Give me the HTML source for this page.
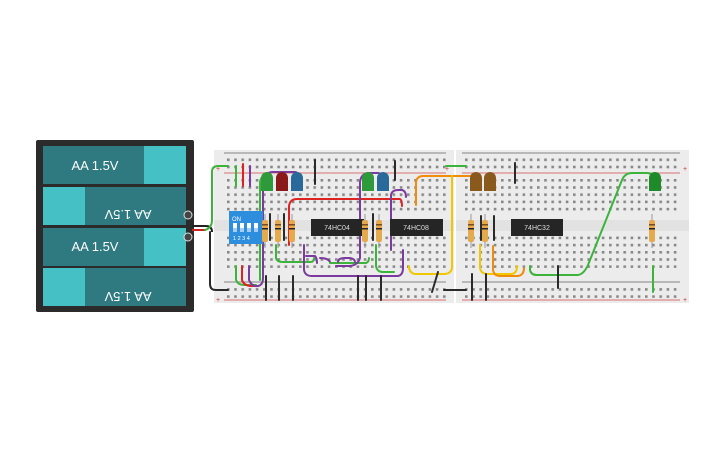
<!DOCTYPE html>
<html><head><meta charset="utf-8"><style>
html,body{margin:0;padding:0;background:#fff;width:725px;height:453px;overflow:hidden}
svg{display:block}
text{font-family:"Liberation Sans",sans-serif}
</style></head><body>
<svg width="725" height="453" viewBox="0 0 725 453" xmlns="http://www.w3.org/2000/svg">
<defs>
<pattern id="pL" width="7.2" height="7.2" patternUnits="userSpaceOnUse" patternTransform="translate(227,179)"><rect width="2.6" height="2.6" fill="#888"/></pattern>
<pattern id="pLr" width="7.2" height="7.2" patternUnits="userSpaceOnUse" patternTransform="translate(227,158.5)"><rect width="2.6" height="2.6" fill="#888"/></pattern>
<pattern id="pR" width="7.2" height="7.2" patternUnits="userSpaceOnUse" patternTransform="translate(465,179)"><rect width="2.6" height="2.6" fill="#888"/></pattern>
<pattern id="pRr" width="7.2" height="7.2" patternUnits="userSpaceOnUse" patternTransform="translate(465,158.5)"><rect width="2.6" height="2.6" fill="#888"/></pattern>
</defs>

<!-- battery -->
<rect x="36" y="140" width="158" height="172" rx="2" fill="#2b2b2b"/>
<g>
<rect x="43" y="146" width="143" height="38" fill="#2e7a80"/><rect x="144" y="146" width="42" height="38" fill="#45c1c5"/>
<text x="95" y="170" fill="#fff" font-size="13" text-anchor="middle">AA 1.5V</text>
<rect x="43" y="187" width="143" height="38" fill="#2e7a80"/><rect x="43" y="187" width="42" height="38" fill="#45c1c5"/>
<text x="128" y="202" fill="#fff" font-size="13" text-anchor="middle" transform="rotate(180 128 206)">AA 1.5V</text>
<rect x="43" y="228" width="143" height="38" fill="#2e7a80"/><rect x="144" y="228" width="42" height="38" fill="#45c1c5"/>
<text x="95" y="251" fill="#fff" font-size="13" text-anchor="middle">AA 1.5V</text>
<rect x="43" y="268" width="143" height="38" fill="#2e7a80"/><rect x="43" y="268" width="42" height="38" fill="#45c1c5"/>
<text x="128" y="284" fill="#fff" font-size="13" text-anchor="middle" transform="rotate(180 128 288)">AA 1.5V</text>
</g>
<circle cx="188" cy="215" r="4" fill="#444" stroke="#ddd"/><circle cx="188" cy="237" r="4" fill="#444" stroke="#ddd"/>
<path d="M192 226 H206 Q212 226 212 232" stroke="#222" stroke-width="2" fill="none"/>
<path d="M192 230 H206" stroke="#c22" stroke-width="2" fill="none"/>

<!-- boards -->
<rect x="214" y="150" width="240" height="153" fill="#ececec"/>
<rect x="456" y="150" width="233" height="153" fill="#ececec"/>
<rect x="214" y="220" width="240" height="11" fill="#e2e2e2"/>
<rect x="456" y="220" width="233" height="11" fill="#e2e2e2"/>
<line x1="224" y1="153" x2="446" y2="153" stroke="#999" stroke-width="1.2"/>
<line x1="224" y1="173" x2="446" y2="173" stroke="#d88" stroke-width="1.2"/>
<line x1="224" y1="282" x2="446" y2="282" stroke="#999" stroke-width="1.2"/>
<line x1="224" y1="300" x2="446" y2="300" stroke="#d88" stroke-width="1.2"/>
<line x1="462" y1="153" x2="680" y2="153" stroke="#999" stroke-width="1.2"/>
<line x1="462" y1="173" x2="680" y2="173" stroke="#d88" stroke-width="1.2"/>
<line x1="462" y1="282" x2="680" y2="282" stroke="#999" stroke-width="1.2"/>
<line x1="462" y1="300" x2="680" y2="300" stroke="#d88" stroke-width="1.2"/>
<rect x="227" y="157" width="220" height="12" fill="url(#pLr)"/>
<rect x="227" y="286" width="220" height="12" fill="url(#pLr)"/>
<rect x="227" y="178" width="220" height="33" fill="url(#pL)"/>
<rect x="227" y="235" width="220" height="33" fill="url(#pL)"/>
<rect x="465" y="157" width="214" height="12" fill="url(#pRr)"/>
<rect x="465" y="286" width="214" height="12" fill="url(#pRr)"/>
<rect x="465" y="178" width="214" height="33" fill="url(#pR)"/>
<rect x="465" y="235" width="214" height="33" fill="url(#pR)"/>
<g fill="#c33" font-size="7"><text x="216" y="171">+</text><text x="216" y="302">+</text><text x="683" y="171">+</text><text x="683" y="302">+</text><text x="445" y="171">+</text></g>

<!-- wires -->
<g fill="none" stroke-width="2" stroke-linecap="round" stroke-linejoin="round">
<path d="M205 230 Q212 228 212 220 V172 Q212 166 218 166 H228" stroke="#3cb43c"/>
<path d="M210 232 V284 Q210 290 216 290 H228" stroke="#2a2a2a"/>
<path d="M236 166 V186" stroke="#3cb43c"/><path d="M243 164 V186" stroke="#d22"/><path d="M250 166 V186" stroke="#7b3a9e"/>
<path d="M236 266 V280 Q238 285 244 285 H256" stroke="#3cb43c"/>
<path d="M242 266 V280 Q244 286 252 286 H258" stroke="#d22"/>
<path d="M249 266 V280 Q252 287 258 286 Q263 285 263 278 V180 Q264 173 272 172 H295 Q300 173 300 180" stroke="#7b3a9e"/>
<path d="M260 280 V182 Q261 176 266 176" stroke="#3cb43c"/>
<path d="M289 245 V206 Q290 199 297 199 H400 Q402 200 402 206" stroke="#d22"/>
<path d="M276 245 V258 Q277 262 283 262 H310 Q314 262 314 258" stroke="#3cb43c"/>
<path d="M304 245 V270 Q305 276 312 276 H398 Q403 275 403 268 V250" stroke="#7b3a9e"/>
<path d="M306 256 H315 Q317 258 317 263 M320 258 Q328 258 330 262" stroke="#7b3a9e"/>
<path d="M330 263 H366 Q369 262 369 258" stroke="#3cb43c"/>
<path d="M338 262 Q338 258 345 258 H350 Q355 259 355 262" stroke="#7b3a9e"/>
<path d="M336 266 H350 Q358 265 360 258 V182 Q361 174 368 173 H378 Q384 174 384 180" stroke="#7b3a9e"/>
<path d="M376 245 V266 Q377 272 383 272 H394" stroke="#3cb43c"/>
<path d="M391 250 V195 Q392 190 398 190 H402 Q406 191 406 197" stroke="#7b3a9e"/>
<path d="M416 205 V182 Q417 176 423 176 H470 Q476 177 476 184" stroke="#f08c0a"/>
<path d="M452 176 V268 Q451 274 444 274 H415 Q409 273 409 266" stroke="#f0c800"/>
<path d="M480 245 V268 Q481 274 488 274 H512 Q517 273 517 266" stroke="#f0c800"/>
<path d="M493 246 V270 Q494 276 500 276 H518 Q524 275 524 268" stroke="#f08c0a"/>
<path d="M530 266 V270 Q531 275 537 275 H578 Q584 274 588 265 L622 180 Q625 173 632 173 H648 Q654 174 654 182" stroke="#3cb43c"/>
<path d="M653 266 V292" stroke="#3cb43c"/>
<path d="M446 166 H466" stroke="#3cb43c"/>
<path d="M444 290 H466" stroke="#2a2a2a"/>
<g stroke="#2a2a2a">
<path d="M315 160 V184"/><path d="M395 161 V180"/><path d="M515 163 V183"/>
<path d="M270 214 V240"/><path d="M284 214 V240"/><path d="M373 214 V240"/><path d="M481 216 V240"/><path d="M494 216 V240"/>
<path d="M266 276 V300"/><path d="M279 276 V300"/><path d="M293 276 V300"/><path d="M358 276 V300"/><path d="M366 276 V300"/><path d="M381 276 V300"/>
<path d="M432 292 L438 272"/><path d="M472 274 V300"/><path d="M486 274 V300"/><path d="M558 266 V288"/>
</g>
</g>

<!-- DIP switch -->
<rect x="229" y="211" width="34" height="33" fill="#2e8ede"/>
<text x="232" y="221" fill="#fff" font-size="6">ON</text>
<g fill="#fff"><rect x="233" y="223" width="4" height="9"/><rect x="240" y="223" width="4" height="9"/><rect x="247" y="223" width="4" height="9"/><rect x="254" y="223" width="4" height="9"/></g>
<g><rect x="233" y="228" width="4" height="4" fill="#a8cdf0"/><rect x="240" y="228" width="4" height="4" fill="#a8cdf0"/><rect x="247" y="228" width="4" height="4" fill="#a8cdf0"/><rect x="254" y="228" width="4" height="4" fill="#a8cdf0"/></g>
<text x="233" y="240" fill="#fff" font-size="5.5">1 2 3 4</text>

<!-- chips -->
<g>
<rect x="311" y="219" width="53" height="17" fill="#252525"/><text x="337" y="230" fill="#ddd" font-size="7" text-anchor="middle" font-family="Liberation Mono">74HC04</text>
<rect x="390" y="219" width="53" height="17" fill="#252525"/><text x="416" y="230" fill="#ddd" font-size="7" text-anchor="middle" font-family="Liberation Mono">74HC08</text>
<rect x="511" y="219" width="52" height="17" fill="#252525"/><text x="537" y="230" fill="#ddd" font-size="7" text-anchor="middle" font-family="Liberation Mono">74HC32</text>
</g>

<!-- resistors -->
<g>
<g id="r"><rect x="262" y="220" width="6" height="22" rx="2" fill="#e6a94e"/><rect x="262" y="224" width="6" height="1.5" fill="#7a4a1a"/><rect x="262" y="228" width="6" height="1.5" fill="#222"/><rect x="262" y="236" width="6" height="1.5" fill="#d6b44a"/><line x1="265" y1="214" x2="265" y2="220" stroke="#999"/><line x1="265" y1="242" x2="265" y2="248" stroke="#999"/></g>
<use href="#r" x="13"/><use href="#r" x="27"/><use href="#r" x="100"/><use href="#r" x="114"/><use href="#r" x="206"/><use href="#r" x="220"/><use href="#r" x="387"/>
</g>

<!-- LEDs -->
<g>
<path d="M261 191 V178 A6 6 0 0 1 273 178 V191 Z" fill="#2e9a3a"/>
<path d="M276 191 V178 A6 6 0 0 1 288 178 V191 Z" fill="#8a1a1a"/>
<path d="M291 191 V178 A6 6 0 0 1 303 178 V191 Z" fill="#2a6a9a"/>
<path d="M362 191 V178 A6 6 0 0 1 374 178 V191 Z" fill="#2e9a3a"/>
<path d="M377 191 V178 A6 6 0 0 1 389 178 V191 Z" fill="#2a6a9a"/>
<path d="M470 191 V178 A6 6 0 0 1 482 178 V191 Z" fill="#8a5a1c"/>
<path d="M484 191 V178 A6 6 0 0 1 496 178 V191 Z" fill="#8a5a1c"/>
<path d="M649 191 V178 A6 6 0 0 1 661 178 V191 Z" fill="#1f8a2a"/>
</g>
</svg>
</body></html>
